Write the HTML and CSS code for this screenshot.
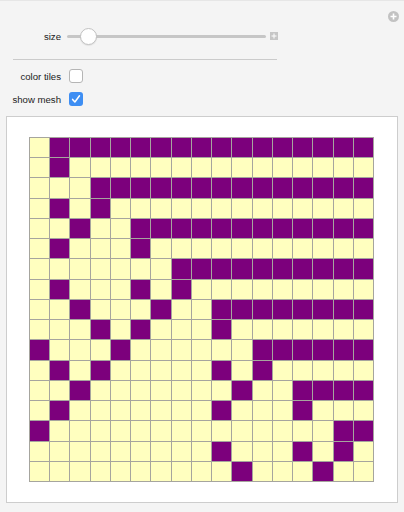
FILE: index.html
```html
<!DOCTYPE html>
<html>
<head>
<meta charset="utf-8">
<link rel="stylesheet" href="styles.css">
</head>
<body>
<div class="panel">
  <div class="add-btn" aria-label="add">
    <svg width="11" height="11" viewBox="0 0 11 11"><circle cx="5.5" cy="5.5" r="5.5" fill="#c2c2c2"/><path d="M5.5 2.5v6M2.5 5.5h6" stroke="#fff" stroke-width="1.6"/></svg>
  </div>
  <div class="controls">
    <div class="row slider-row">
      <span class="label">size</span>
      <div class="slider">
        <div class="track"></div>
        <div class="thumb"></div>
      </div>
      <div class="plus-box">
        <svg width="8" height="8" viewBox="0 0 8 8"><rect width="8" height="8" fill="#c6c6c6"/><path d="M4 1.5v5M1.5 4h5" stroke="#fff" stroke-width="1"/></svg>
      </div>
    </div>
    <div class="separator"></div>
    <div class="row check-row">
      <span class="label">color tiles</span>
      <span class="checkbox"></span>
    </div>
    <div class="row check-row">
      <span class="label">show mesh</span>
      <span class="checkbox checked">
        <svg width="14" height="14" viewBox="0 0 14 14"><path d="M3.6 7.4l2.3 2.6 4.6-6.2" fill="none" stroke="#fff" stroke-width="1.5" stroke-linecap="round" stroke-linejoin="round"/></svg>
      </span>
    </div>
  </div>
  <div class="output">
    <div class="grid" id="grid"></div>
  </div>
</div>
<script src="script.js"></script>
</body>
</html>
```

FILE: styles.css
```css
html, body {
  margin: 0;
  padding: 0;
}
body {
  width: 404px;
  height: 512px;
  background: #f3f3f3;
  font-family: "Liberation Sans", Arial, sans-serif;
  font-size: 9.6px;
  color: #222;
  overflow: hidden;
}
.panel {
  position: relative;
  width: 404px;
  height: 512px;
  box-sizing: border-box;
  border-top: 1px solid #e6e6e6;
  background: #f4f4f4;
}
.add-btn {
  position: absolute;
  top: 10px;
  left: 388px;
  width: 11px;
  height: 11px;
  line-height: 0;
}
.controls {
  padding-top: 27px;
}
.row {
  display: flex;
  align-items: center;
}
.label {
  width: 61px;
  text-align: right;
  flex: none;
}
.slider-row {
  height: 16px;
}
.slider {
  position: relative;
  width: 199px;
  height: 16px;
  margin-left: 6px;
  display: flex;
  align-items: center;
}
.track {
  width: 100%;
  height: 3px;
  border-radius: 2px;
  background: #c6c6c6;
}
.thumb {
  position: absolute;
  left: 13px;
  top: -0.5px;
  width: 15px;
  height: 15px;
  border-radius: 50%;
  background: #fff;
  border: 1px solid #c2c2c2;
  box-shadow: 0 1px 1px rgba(0,0,0,0.08);
}
.plus-box {
  margin-left: 4px;
  width: 8px;
  height: 8px;
  line-height: 0;
}
.separator {
  margin: 15px 0 0 13px;
  width: 264px;
  height: 1px;
  background: #cbcbcb;
}
.check-row {
  height: 14px;
  margin-top: 9px;
}
.checkbox {
  margin-left: 8px;
  width: 14px;
  height: 14px;
  box-sizing: border-box;
  border: 1px solid #b5b5b5;
  border-radius: 3px;
  background: #fff;
  line-height: 0;
}
.checkbox.checked {
  border: none;
  background: #3e8ef3;
}
.output {
  margin: 10px 0 0 6px;
  width: 392px;
  height: 387px;
  box-sizing: border-box;
  border: 1px solid #cdcdcd;
  background: #fff;
  padding: 20px 0 0 22px;
}
.grid {
  display: grid;
  grid-template-columns: repeat(17, 1fr);
  grid-template-rows: repeat(17, 1fr);
  gap: 1px;
  padding: 1px;
  width: 345px;
  height: 345px;
  box-sizing: border-box;
  background: #a6a59e;
}
.cell {
  background: #ffffbf;
}
.cell.p {
  background: #7c007c;
}
```

FILE: script.js
```js
var rows = [
  [[1,16]],
  [1],
  [[3,16]],
  [1,3],
  [2,[5,16]],
  [1,5],
  [[7,16]],
  [1,5,7],
  [2,6,[9,16]],
  [3,5,9],
  [0,4,[11,16]],
  [1,3,9,11],
  [2,10,[13,16]],
  [1,9,13],
  [0,15,16],
  [9,13,15],
  [10,14]
];
var grid = document.getElementById('grid');
rows.forEach(function (spec) {
  var on = {};
  spec.forEach(function (s) {
    if (Array.isArray(s)) { for (var i = s[0]; i <= s[1]; i++) on[i] = true; }
    else on[s] = true;
  });
  for (var c = 0; c < 17; c++) {
    var d = document.createElement('div');
    d.className = on[c] ? 'cell p' : 'cell';
    grid.appendChild(d);
  }
});
```
